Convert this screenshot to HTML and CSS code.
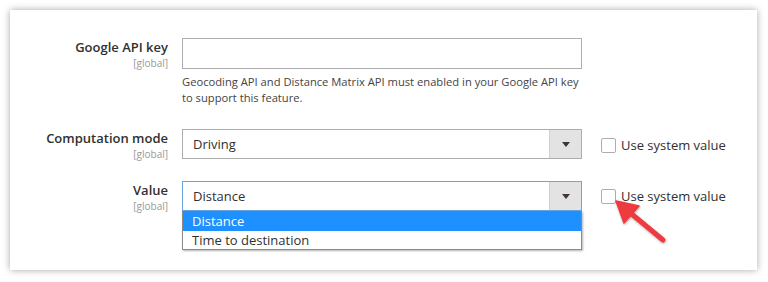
FILE: index.html
```html
<!DOCTYPE html>
<html>
<head>
<meta charset="utf-8">
<link rel="stylesheet" href="styles.css">
</head>
<body>
<div class="page">
  <div class="card">
    <div class="row row-key">
      <div class="label"><span class="title">Google API key</span><span class="scope">[global]</span></div>
      <div class="control">
        <div class="input"></div>
        <p class="note">Geocoding API and Distance Matrix API must enabled in your Google API key<br>to support this feature.</p>
      </div>
    </div>
    <div class="row row-mode">
      <div class="label"><span class="title">Computation mode</span><span class="scope">[global]</span></div>
      <div class="control">
        <div class="select"><span class="value">Driving</span><span class="btn"><span class="tri"></span></span></div>
      </div>
      <label class="sys"><span class="box"></span>Use system value</label>
    </div>
    <div class="row row-value">
      <div class="label"><span class="title">Value</span><span class="scope">[global]</span></div>
      <div class="control">
        <div class="select focus"><span class="value">Distance</span><span class="btn"><span class="tri"></span></span></div>
        <ul class="dropdown">
          <li class="opt active">Distance</li>
          <li class="opt">Time to destination</li>
        </ul>
      </div>
      <label class="sys"><span class="box"></span>Use system value</label>
    </div>
  </div>
  <svg class="pointer" viewBox="600 190 80 60" width="80" height="60">
    <defs>
      <filter id="sh" x="-30%" y="-30%" width="160%" height="160%">
        <feDropShadow dx="0.5" dy="1" stdDeviation="1" flood-color="#000" flood-opacity="0.35"/>
      </filter>
    </defs>
    <g filter="url(#sh)" fill="#ee3a3f" stroke="#ee3a3f">
      <line x1="663" y1="240" x2="628" y2="211" stroke-width="5" stroke-linecap="round"/>
      <polygon points="616,201 624,223 639,206" stroke-width="1.5" stroke-linejoin="round"/>
    </g>
  </svg>
</div>
</body>
</html>
```

FILE: styles.css
```css
* { box-sizing: border-box; }
html, body { margin: 0; padding: 0; background: #fff; }
body { font-family: "Open Sans", "Noto Sans", sans-serif; color: #303030; }
.page { position: relative; padding: 10px 11px 12px 10px; width: 768px; height: 282px; }
.card { background: #fff; height: 260px; box-shadow: 0 0 7px rgba(0,0,0,0.35); padding-top: 28px; }
.row { display: flex; align-items: flex-start; }
.row-mode { margin-top: 23px; }
.row-value { margin-top: 21px; }
.label { width: 158px; display: flex; flex-direction: column; align-items: flex-end; padding-top: 2px; }
.title { font-size: 13px; font-weight: 600; line-height: 15px; color: #303030; }
.scope { font-size: 10px; line-height: 12px; margin-top: 2px; color: #999; }
.control { position: relative; width: 400px; margin-left: 14px; }
.input { height: 31px; border: 1px solid #adadad; background: #fff; }
.note { margin: 5px 0 0; font-size: 11.2px; line-height: 16px; color: #444; white-space: nowrap; }
.select { display: flex; height: 30px; border: 1px solid #adadad; background: #fff; }
.select.focus { border-color: #6aa6e3; }
.value { flex: 1; padding-left: 10px; font-size: 13px; line-height: 28px; color: #303030; }
.btn { width: 32px; background: #e3e3e3; border-left: 1px solid #cfcfcf; display: flex; align-items: center; justify-content: center; }
.tri { width: 0; height: 0; border-left: 4px solid transparent; border-right: 4px solid transparent; border-top: 5px solid #41362f; }
.dropdown { position: absolute; left: 0; top: 30px; width: 400px; margin: 0; padding: 0; list-style: none; background: #fff; border: 1px solid #8a8a8a; border-top: 0; box-shadow: 1px 1px 2px rgba(0,0,0,0.3); }
.opt { font-size: 13px; line-height: 18px; height: 18px; padding-left: 9px; color: #303030; }
.opt.active { background: #1e90ff; color: #fff; height: 20px; line-height: 20px; }
.sys { display: flex; align-items: center; margin-left: 19px; margin-top: 8px; font-size: 13px; line-height: 16px; color: #303030; }
.box { width: 15px; height: 15px; border: 1px solid #adadad; border-radius: 2px; background: #fff; margin-right: 5px; }
.row-value .sys { margin-top: 7px; }
.pointer { position: absolute; left: 600px; top: 190px; }
```
